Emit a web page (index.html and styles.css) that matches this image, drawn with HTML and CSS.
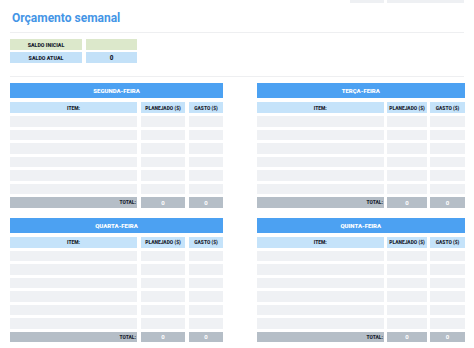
FILE: index.html
```html
<!DOCTYPE html>
<html lang="pt">
<head>
<meta charset="utf-8">
<title>Orçamento semanal</title>
<link rel="stylesheet" href="styles.css">
</head>
<body>
<div class="page">
  <div class="topbar"><span class="tb tb-a"></span><span class="tb tb-b"></span></div>
  <h1 class="title">Orçamento semanal</h1>
  <div class="saldo">
    <div class="saldo-row green"><div class="s-label">SALDO INICIAL</div><div class="s-val"></div></div>
    <div class="saldo-row blue"><div class="s-label">SALDO ATUAL</div><div class="s-val">0</div></div>
  </div>
  <div class="days">
    <div class="day left">
      <div class="day-head">SEGUNDA-FEIRA</div>
      <div class="grid">
        <div class="ch">ITEM:</div><div class="ch">PLANEJADO ($)</div><div class="ch">GASTO ($)</div>
        <div class="c"></div><div class="c"></div><div class="c"></div>
        <div class="c"></div><div class="c"></div><div class="c"></div>
        <div class="c"></div><div class="c"></div><div class="c"></div>
        <div class="c"></div><div class="c"></div><div class="c"></div>
        <div class="c"></div><div class="c"></div><div class="c"></div>
        <div class="c"></div><div class="c"></div><div class="c"></div>
        <div class="t t-label">TOTAL:</div><div class="t">0</div><div class="t">0</div>
      </div>
    </div>
    <div class="day right">
      <div class="day-head">TERÇA-FEIRA</div>
      <div class="grid">
        <div class="ch">ITEM:</div><div class="ch">PLANEJADO ($)</div><div class="ch">GASTO ($)</div>
        <div class="c"></div><div class="c"></div><div class="c"></div>
        <div class="c"></div><div class="c"></div><div class="c"></div>
        <div class="c"></div><div class="c"></div><div class="c"></div>
        <div class="c"></div><div class="c"></div><div class="c"></div>
        <div class="c"></div><div class="c"></div><div class="c"></div>
        <div class="c"></div><div class="c"></div><div class="c"></div>
        <div class="t t-label">TOTAL:</div><div class="t">0</div><div class="t">0</div>
      </div>
    </div>
    <div class="day left">
      <div class="day-head">QUARTA-FEIRA</div>
      <div class="grid">
        <div class="ch">ITEM:</div><div class="ch">PLANEJADO ($)</div><div class="ch">GASTO ($)</div>
        <div class="c"></div><div class="c"></div><div class="c"></div>
        <div class="c"></div><div class="c"></div><div class="c"></div>
        <div class="c"></div><div class="c"></div><div class="c"></div>
        <div class="c"></div><div class="c"></div><div class="c"></div>
        <div class="c"></div><div class="c"></div><div class="c"></div>
        <div class="c"></div><div class="c"></div><div class="c"></div>
        <div class="t t-label">TOTAL:</div><div class="t">0</div><div class="t">0</div>
      </div>
    </div>
    <div class="day right">
      <div class="day-head">QUINTA-FEIRA</div>
      <div class="grid">
        <div class="ch">ITEM:</div><div class="ch">PLANEJADO ($)</div><div class="ch">GASTO ($)</div>
        <div class="c"></div><div class="c"></div><div class="c"></div>
        <div class="c"></div><div class="c"></div><div class="c"></div>
        <div class="c"></div><div class="c"></div><div class="c"></div>
        <div class="c"></div><div class="c"></div><div class="c"></div>
        <div class="c"></div><div class="c"></div><div class="c"></div>
        <div class="c"></div><div class="c"></div><div class="c"></div>
        <div class="t t-label">TOTAL:</div><div class="t">0</div><div class="t">0</div>
      </div>
    </div>
  </div>
</div>
</body>
</html>
```
FILE: styles.css
```css
html, body {
  margin: 0;
  padding: 0;
  background: #ffffff;
}
body {
  font-family: Roboto, "Liberation Sans", sans-serif;
  color: #1a2430;
}
.page {
  width: 474px;
  padding: 0 9px 0 10px;
  box-sizing: border-box;
}
.topbar {
  display: flex;
  justify-content: flex-end;
  gap: 3px;
  height: 3px;
  padding-right: 1px;
}
.tb {
  display: block;
  height: 3px;
  background: #eef0f3;
}
.tb-a { width: 34px; }
.tb-b { width: 77px; }
.title {
  margin: 8px 1px 0 0;
  padding: 0 0 7px 2px;
  font-size: 12px;
  line-height: 14px;
  font-weight: 700;
  color: #4495e6;
  border-bottom: 1px solid #eeeff1;
}
.saldo {
  display: flex;
  flex-direction: column;
  gap: 2px;
  padding: 6px 0 13px 0;
  margin-right: 1px;
  border-bottom: 1px solid #eeeff1;
}
.saldo-row {
  display: flex;
  gap: 4px;
  height: 11px;
}
.s-label, .s-val {
  display: flex;
  align-items: center;
  justify-content: center;
  font-weight: 900;
  color: #1a2430;
}
.s-label {
  width: 72px;
  font-size: 5.3px;
}
.s-val {
  width: 51px;
  font-size: 6.3px;
}
.green .s-label, .green .s-val { background: #dce8cb; }
.blue .s-label, .blue .s-val { background: #c3e1f8; }
.days {
  display: grid;
  grid-template-columns: 213px 208.5px;
  column-gap: 33.5px;
  row-gap: 10px;
  padding-top: 6px;
}
.day-head {
  height: 15px;
  display: flex;
  align-items: center;
  justify-content: center;
  background: #4ca1f2;
  color: #ffffff;
  font-weight: 900;
  font-size: 6px;
  margin-bottom: 4px;
}
.grid {
  display: grid;
  grid-template-rows: 11px repeat(7, 10.5px);
  row-gap: 3px;
}
.left .grid {
  grid-template-columns: 127px 44px 34px;
  column-gap: 4px;
}
.right .grid {
  grid-template-columns: 127.5px 40px 35px;
  column-gap: 3px;
}
.ch {
  background: #c5e3fa;
  display: flex;
  align-items: center;
  justify-content: center;
  font-size: 4.9px;
  font-weight: 900;
  color: #1a2430;
}
.c {
  background: #eff1f4;
}
.t {
  background: #b5bec7;
  display: flex;
  align-items: center;
  justify-content: center;
  font-size: 6px;
  font-weight: 700;
  color: #ffffff;
}
.t-label {
  justify-content: flex-end;
  padding-right: 1px;
  font-size: 4.9px;
  font-weight: 900;
  color: #1a2430;
}
```
